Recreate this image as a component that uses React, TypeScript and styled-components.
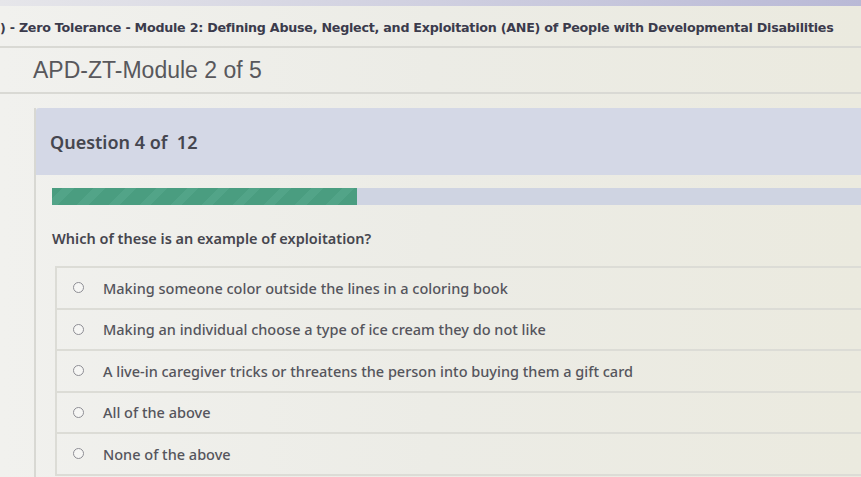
import styled, { createGlobalStyle } from "styled-components";

const Global = createGlobalStyle`
  html, body {
    margin: 0;
    padding: 0;
    background: #ecebe4;
    overflow: hidden;
  }
  * { box-sizing: border-box; }
`;

const Page = styled.div`
  width: 861px;
  height: 477px;
  overflow: hidden;
  background: linear-gradient(90deg, #f1f1ee 0%, #ecece6 50%, #ebeadf 100%);
  display: flex;
  flex-direction: column;
`;

const TopStrip = styled.div`
  height: 6px;
  background: linear-gradient(90deg, #e6e6ea 0%, #b9b9d6 100%);
`;

const TitleBar = styled.div`
  height: 42px;
  display: flex;
  align-items: center;
  padding-top: 2px;
  border-bottom: 2px solid #d9d9d4;
  white-space: nowrap;
`;

const Title = styled.h1`
  margin: 0;
  font-family: "DejaVu Sans", sans-serif;
  font-weight: 700;
  font-size: 12.7px;
  letter-spacing: -0.25px;
  color: #3b3b4c;
`;

const ModuleBar = styled.div`
  height: 46px;
  padding-left: 33px;
  display: flex;
  align-items: center;
  border-bottom: 2px solid #d9d9d4;
`;

const ModuleName = styled.h2`
  margin: 0;
  font-family: "Liberation Sans", sans-serif;
  font-weight: 400;
  font-size: 23px;
  color: #58585c;
`;

const Card = styled.section`
  margin: 14px 0 0 34px;
  flex: 1;
  border-left: 2px solid #d8d8d3;
  display: flex;
  flex-direction: column;
`;

const CardHeader = styled.div`
  height: 67px;
  background: #d4d8e6;
  border-radius: 3px 0 0 0;
  padding-left: 14px;
  display: flex;
  align-items: center;
`;

const QuestionCount = styled.h3`
  margin: 0;
  font-family: "Noto Sans", sans-serif;
  font-weight: 600;
  font-size: 18px;
  color: #45464f;
`;

const CardBody = styled.div`
  padding: 13px 0 0 16px;
  display: flex;
  flex-direction: column;
`;

const Progress = styled.div`
  height: 17px;
  background: #cfd4e2;
  display: flex;
`;

const ProgressFill = styled.div`
  height: 100%;
  background: repeating-linear-gradient(
    -45deg,
    #4a9d80 0px,
    #4a9d80 14px,
    #52a488 14px,
    #52a488 22px
  );
`;

const Prompt = styled.p`
  margin: 23px 0 0 0;
  font-family: "Noto Sans", sans-serif;
  font-weight: 600;
  font-size: 14.5px;
  color: #46464e;
`;

const Options = styled.ul`
  list-style: none;
  margin: 18px 0 0 3px;
  padding: 0;
  border-top: 2px solid #dcdcd6;
  border-left: 2px solid #dcdcd6;
`;

const Option = styled.li`
  height: 41.5px;
  display: flex;
  align-items: center;
  padding-left: 16px;
  border-bottom: 2px solid #dcdcd6;
`;

const Radio = styled.span`
  width: 11px;
  height: 11px;
  border-radius: 50%;
  border: 1.5px solid #8e8e94;
  background: #f6f6f4;
  flex-shrink: 0;
`;

const OptionText = styled.span`
  margin-left: 19px;
  font-family: "Noto Sans", sans-serif;
  font-weight: 500;
  font-size: 14.5px;
  color: #55555c;
`;

const options = [
  "Making someone color outside the lines in a coloring book",
  "Making an individual choose a type of ice cream they do not like",
  "A live-in caregiver tricks or threatens the person into buying them a gift card",
  "All of the above",
  "None of the above",
];

export default function App() {
  const current = 4;
  const total = 12;
  const progress = 37.7;
  return (
    <Page>
      <Global />
      <TopStrip />
      <TitleBar>
        <Title>
          ) - Zero Tolerance - Module 2: Defining Abuse, Neglect, and Exploitation (ANE) of People with
          Developmental Disabilities
        </Title>
      </TitleBar>
      <ModuleBar>
        <ModuleName>APD-ZT-Module 2 of 5</ModuleName>
      </ModuleBar>
      <Card>
        <CardHeader>
          <QuestionCount>
            Question {current} of&nbsp; {total}
          </QuestionCount>
        </CardHeader>
        <CardBody>
          <Progress>
            <ProgressFill style={{ width: `${progress}%` }} />
          </Progress>
          <Prompt>Which of these is an example of exploitation?</Prompt>
          <Options>
            {options.map((o) => (
              <Option key={o}>
                <Radio />
                <OptionText>{o}</OptionText>
              </Option>
            ))}
          </Options>
        </CardBody>
      </Card>
    </Page>
  );
}
